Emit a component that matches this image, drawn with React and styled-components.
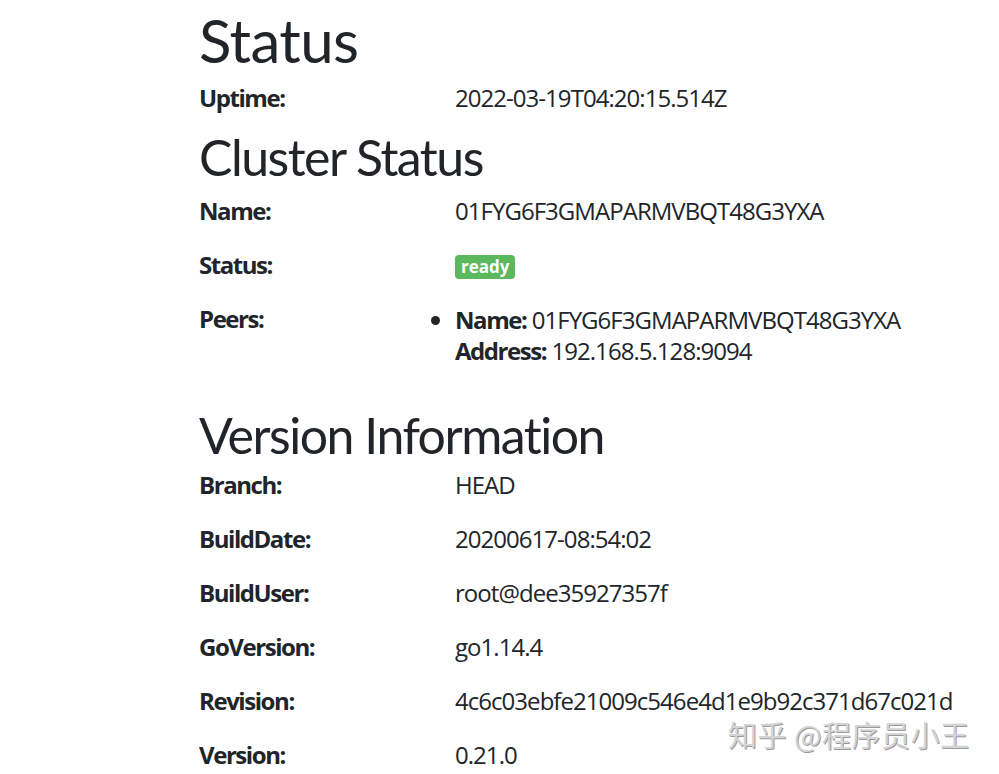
import React from "react";
import styled, { createGlobalStyle } from "styled-components";

const GlobalStyle = createGlobalStyle`
  html, body {
    margin: 0;
    padding: 0;
    background: #fff;
  }
  body {
    font-family: "Open Sans", "Noto Sans", sans-serif;
    color: #212529;
    font-size: 24px;
    line-height: 30px;
  }
`;

const statusInfo = {
  uptime: "2022-03-19T04:20:15.514Z",
  cluster: {
    name: "01FYG6F3GMAPARMVBQT48G3YXA",
    status: "ready",
    peers: [{ name: "01FYG6F3GMAPARMVBQT48G3YXA", address: "192.168.5.128:9094" }],
  },
  version: [
    ["Branch", "HEAD"],
    ["BuildDate", "20200617-08:54:02"],
    ["BuildUser", "root@dee35927357f"],
    ["GoVersion", "go1.14.4"],
    ["Revision", "4c6c03ebfe21009c546e4d1e9b92c371d67c021d"],
    ["Version", "0.21.0"],
  ],
};

const App = () => {
  return (
    <Page>
      <GlobalStyle />
      <Container>
        <Title>Status</Title>
        <Row gap="13px">
          <Label>Uptime:</Label>
          <Value>{statusInfo.uptime}</Value>
        </Row>

        <Heading>Cluster Status</Heading>
        <Row>
          <Label>Name:</Label>
          <Value>{statusInfo.cluster.name}</Value>
        </Row>
        <Row>
          <Label>Status:</Label>
          <Value>
            <Badge>{statusInfo.cluster.status}</Badge>
          </Value>
        </Row>
        <Row gap="38px">
          <Label>Peers:</Label>
          <Value>
            <PeerList>
              {statusInfo.cluster.peers.map((p) => (
                <li key={p.name}>
                  <b>Name:</b> {p.name}
                  <br />
                  <b>Address:</b> {p.address}
                </li>
              ))}
            </PeerList>
          </Value>
        </Row>

        <Heading after="4px">Version Information</Heading>
        {statusInfo.version.map(([k, v]) => (
          <Row key={k}>
            <Label>{k}:</Label>
            <Value>{v}</Value>
          </Row>
        ))}
      </Container>
      <Watermark>知乎 @程序员小王</Watermark>
    </Page>
  );
};

export default App;

const Page = styled.div`
  position: relative;
  width: 100%;
  min-height: 774px;
  overflow: hidden;
`;

const Container = styled.main`
  padding: 4px 0 0 199px;
  letter-spacing: -0.04em;
`;

const Title = styled.h1`
  margin: 0 0 7px;
  font-family: Lato, "Open Sans", sans-serif;
  font-size: 60px;
  line-height: 72px;
  font-weight: 400;
  letter-spacing: -0.01em;
`;

const Heading = styled.h2`
  margin: 0 0 ${(p) => p.after || "8px"};
  padding-top: 1px;
  font-family: Lato, "Open Sans", sans-serif;
  font-size: 50px;
  line-height: 61px;
  font-weight: 400;
  letter-spacing: -0.03em;
`;

const Row = styled.div`
  display: grid;
  grid-template-columns: 256px 1fr;
  margin-bottom: ${(p) => p.gap || "24px"};
`;

const Label = styled.div`
  font-weight: 700;
  letter-spacing: -0.06em;
`;

const Value = styled.div`
  white-space: nowrap;
`;

const Badge = styled.span`
  display: inline-block;
  vertical-align: 1px;
  padding: 0 6px;
  height: 24px;
  line-height: 24px;
  border-radius: 4px;
  background: #5cb85c;
  color: #fff;
  font-size: 17px;
  font-weight: 700;
  letter-spacing: 0;
`;

const PeerList = styled.ul`
  margin: 0;
  padding: 0;
  list-style: disc outside;
  line-height: 31px;

  b {
    font-weight: 700;
    letter-spacing: -0.06em;
  }
`;

const Watermark = styled.div`
  position: absolute;
  left: 728px;
  top: 718px;
  font-family: "Noto Sans CJK SC", "Open Sans", sans-serif;
  font-size: 29px;
  line-height: 32px;
  color: #d4d4d4;
  text-shadow: 1px 1px 0 #9a9a9a;
  letter-spacing: 0.5px;
`;
